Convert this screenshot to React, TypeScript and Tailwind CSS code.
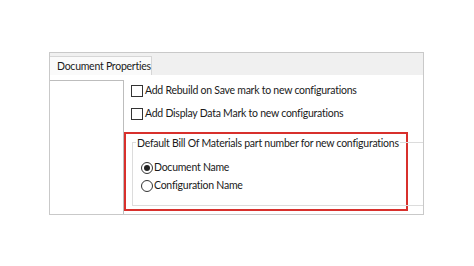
export default function App() {
  const font = "font-['Lato','Segoe_UI',sans-serif]";
  return (
    <div className={`w-[474px] h-[266px] bg-white pl-[49px] pt-[52px] ${font} text-[10.5px] tracking-[-0.25px] text-[#1a1a1a] whitespace-nowrap`}>
      <div className="w-[375px] h-[163px] border border-[#c9c9c9] flex flex-col">
        {/* tab strip */}
        <div className="h-[22px] bg-[#f0f0f0] flex items-end shrink-0">
          <div className="h-[19px] w-[102px] bg-[#fafafa] border-t border-r border-[#d6d6d6] flex items-center pl-[7px] leading-none">
            Document Properties
          </div>
        </div>
        {/* body */}
        <div className="flex flex-1">
          <div className="w-[74px] mt-[5px] border-t border-r border-[#bdbdbd] bg-white shrink-0" />
          <div className="flex-1 flex flex-col pl-[7px] pt-[10px]">
            <label className="flex items-center h-[12px] gap-[2px]">
              <span className="w-[12px] h-[12px] border border-[#333] bg-white" />
              Add Rebuild on Save mark to new configurations
            </label>
            <label className="flex items-center h-[12px] gap-[2px] mt-[11px]">
              <span className="w-[12px] h-[12px] border border-[#333] bg-white" />
              Add Display Data Mark to new configurations
            </label>
            <div className="relative mt-[12px] -ml-[7px] w-[284px] h-[79px] border-2 border-[#d8302c]">
              <div className="absolute left-[6px] top-[8px] w-[291px] h-[64px] border border-[#dcdcdc] border-r-0" />
              <div className="relative pl-[10px] pt-[2px] flex flex-col">
                <span className="bg-white self-start px-[1px] leading-[14px]">
                  Default Bill Of Materials part number for new configurations
                </span>
                <label className="flex items-center gap-[1px] mt-[11px] h-[13px] pl-[5px]">
                  <span className="w-[12px] h-[12px] rounded-full border border-[#333] flex items-center justify-center">
                    <span className="w-[6px] h-[6px] rounded-full bg-[#222]" />
                  </span>
                  Document Name
                </label>
                <label className="flex items-center gap-[1px] mt-[5px] h-[13px] pl-[5px]">
                  <span className="w-[12px] h-[12px] rounded-full border border-[#333]" />
                  Configuration Name
                </label>
              </div>
            </div>
          </div>
        </div>
      </div>
    </div>
  );
}
